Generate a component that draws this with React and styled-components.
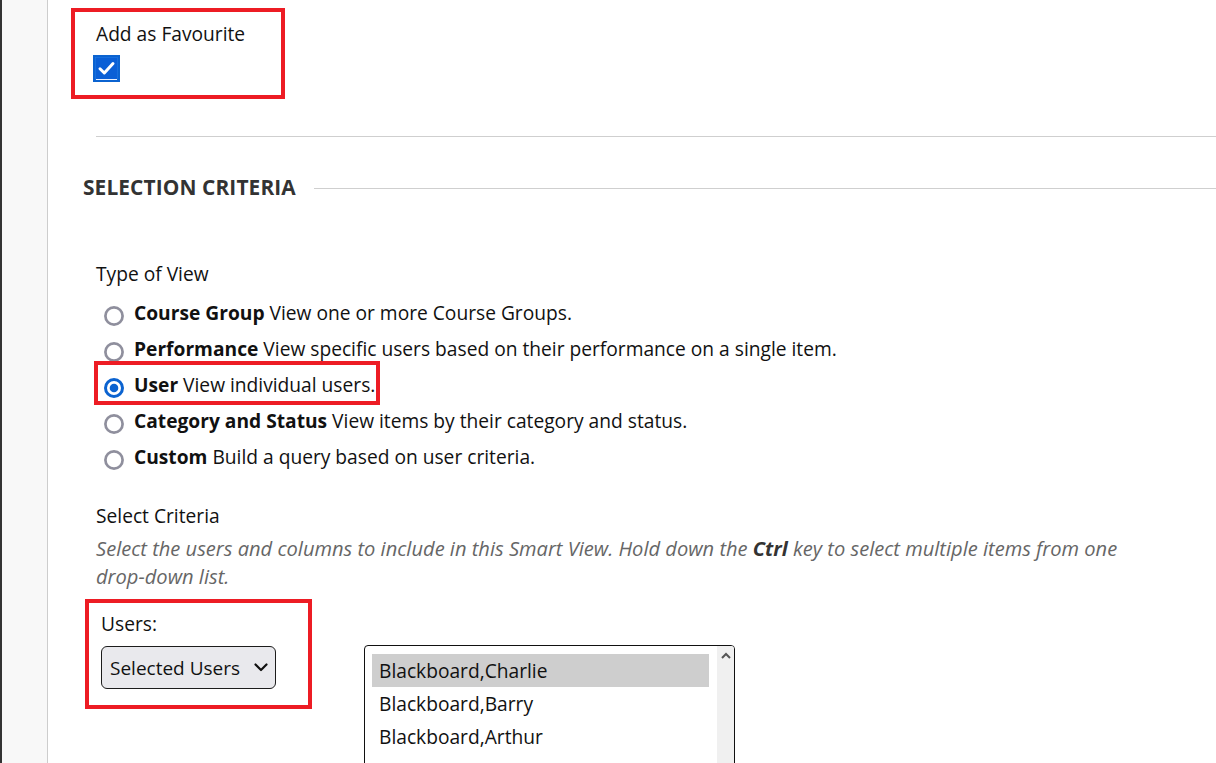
import React from 'react';
import styled, { createGlobalStyle } from 'styled-components';

const GlobalStyle = createGlobalStyle`
  html, body {
    margin: 0;
    padding: 0;
    background: #fff;
  }
  body {
    font-family: "Open Sans", "Noto Sans", sans-serif;
    color: #111;
  }
`;

const viewTypes = [
  { title: 'Course Group', text: 'View one or more Course Groups.' },
  { title: 'Performance', text: 'View specific users based on their performance on a single item.' },
  { title: 'User', text: 'View individual users.', checked: true },
  { title: 'Category and Status', text: 'View items by their category and status.' },
  { title: 'Custom', text: 'Build a query based on user criteria.' },
];

const users = ['Blackboard,Charlie', 'Blackboard,Barry', 'Blackboard,Arthur'];

function Checkbox() {
  return (
    <StyledCheck viewBox="0 0 27 27" width="27" height="27">
      <rect x="0" y="0" width="27" height="27" fill="#0b63d0" />
      <rect x="2.5" y="2.5" width="22" height="22" fill="#0a5fd6" stroke="#1f78e6" strokeWidth="0.6" />
      <path d="M7 13.8 L11.3 18 L20 8.6" fill="none" stroke="#fff" strokeWidth="3" strokeLinecap="round" strokeLinejoin="round" />
      <line x1="3" y1="24.5" x2="24" y2="24.5" stroke="#e8f0ff" strokeWidth="1" />
    </StyledCheck>
  );
}

function Radio({ checked }) {
  return (
    <StyledRadio viewBox="0 0 20 20" width="20" height="20">
      {checked ? (
        <>
          <circle cx="10" cy="10" r="8.5" fill="#fff" stroke="#0b63d0" strokeWidth="3" />
          <circle cx="10" cy="10" r="4.3" fill="#0b63d0" />
        </>
      ) : (
        <circle cx="10" cy="10" r="8.6" fill="#fff" stroke="#8f8f9d" strokeWidth="2.7" />
      )}
    </StyledRadio>
  );
}

export default function App() {
  return (
    <>
      <GlobalStyle />
      <StyledPage>
        <StyledRail />
        <StyledMain>
          <StyledFavBox>
            <StyledLabel>Add as Favourite</StyledLabel>
            <Checkbox />
          </StyledFavBox>

          <StyledRule />

          <StyledSectionHead>
            <h2>Selection Criteria</h2>
            <span />
          </StyledSectionHead>

          <StyledField>
            <StyledLabel>Type of View</StyledLabel>
            <StyledRadioList>
              {viewTypes.map((v) => (
                <StyledRadioRow key={v.title} $highlight={v.checked}>
                  <Radio checked={v.checked} />
                  <p>
                    <b>{v.title}</b> {v.text}
                  </p>
                </StyledRadioRow>
              ))}
            </StyledRadioList>
          </StyledField>

          <StyledCriteria>
            <StyledLabel>Select Criteria</StyledLabel>
            <StyledHint>
              Select the users and columns to include in this Smart View. Hold down the <b>Ctrl</b> key to select
              multiple items from one <span>drop-down</span> list.
            </StyledHint>
          </StyledCriteria>

          <StyledPickerRow>
            <StyledUsersBox>
              <StyledLabel>Users:</StyledLabel>
              <StyledSelect>
                <span>Selected Users</span>
                <svg width="14" height="9" viewBox="0 0 14 9">
                  <path d="M1.5 1.5 L7 7 L12.5 1.5" fill="none" stroke="#111" strokeWidth="2.2" strokeLinecap="round" strokeLinejoin="round" />
                </svg>
              </StyledSelect>
            </StyledUsersBox>

            <StyledListBox>
              <StyledOptions>
                {users.map((u, i) => (
                  <StyledOption key={u} $selected={i === 0}>
                    {u}
                  </StyledOption>
                ))}
              </StyledOptions>
              <StyledScrollbar>
                <svg width="10" height="7" viewBox="0 0 10 7">
                  <path d="M1 6 L5 2 L9 6" fill="none" stroke="#555" strokeWidth="2" />
                </svg>
              </StyledScrollbar>
            </StyledListBox>
          </StyledPickerRow>
        </StyledMain>
      </StyledPage>
    </>
  );
}

const StyledPage = styled.div`
  display: flex;
  width: 100%;
  height: 763px;
  overflow: hidden;
`;

const StyledRail = styled.div`
  flex: 0 0 48px;
  box-sizing: border-box;
  background: #f8f8f8;
  border-left: 2px solid #333;
  border-right: 1px solid #cdcdcd;
`;

const StyledMain = styled.main`
  flex: 1;
  min-width: 0;
  padding-top: 8px;
`;

const StyledLabel = styled.div`
  font-size: 19.2px;
  line-height: 24px;
  color: #111;
`;

const StyledFavBox = styled.div`
  box-sizing: border-box;
  width: 214px;
  height: 91px;
  margin-left: 23px;
  padding: 10px 0 0 21px;
  border: 4px solid #ed1c24;
  display: flex;
  flex-direction: column;
  gap: 9px;
`;

const StyledCheck = styled.svg`
  display: block;
  margin-left: -3px;
`;

const StyledRule = styled.hr`
  margin: 37px 0 0 48px;
  border: 0;
  border-top: 1px solid #cfcfcf;
  height: 0;
`;

const StyledSectionHead = styled.div`
  display: flex;
  align-items: center;
  gap: 18px;
  margin: 38px 0 0 35px;

  h2 {
    margin: 0;
    font-size: 20.9px;
    line-height: 24px;
    font-weight: 700;
    text-transform: uppercase;
    color: #333;
    letter-spacing: 0.1px;
  }

  span {
    flex: 1;
    border-top: 1px solid #cfcfcf;
    margin-top: 2px;
  }
`;

const StyledField = styled.div`
  margin: 63px 0 0 48px;
`;

const StyledRadioList = styled.div`
  margin-top: 9px;
  display: flex;
  flex-direction: column;
  align-items: flex-start;
`;

const StyledRadioRow = styled.label`
  position: relative;
  display: inline-flex;
  align-items: flex-start;
  gap: 10px;
  height: 36px;
  padding-left: 8px;

  p {
    margin: 0;
    font-size: 19.2px;
    line-height: 36px;
    color: #111;
    white-space: nowrap;
  }

  b {
    font-weight: 700;
  }

  ${({ $highlight }) =>
    $highlight &&
    `
    &::after {
      content: '';
      position: absolute;
      top: -6px;
      bottom: -2px;
      left: -2px;
      right: -5px;
      border: 4px solid #ed1c24;
      pointer-events: none;
    }
  `}
`;

const StyledRadio = styled.svg`
  flex: 0 0 20px;
  margin-top: 11px;
`;

const StyledCriteria = styled.div`
  margin: 29px 0 0 48px;
`;

const StyledHint = styled.p`
  max-width: 1100px;
  margin: 7px 0 0;
  font-size: 20.1px;
  line-height: 28px;
  font-style: italic;
  color: #666;

  b {
    font-weight: 700;
    color: #333;
  }

  span {
    white-space: nowrap;
  }
`;

const StyledPickerRow = styled.div`
  display: flex;
  align-items: flex-start;
  gap: 52px;
  margin: 8px 0 0 37px;
`;

const StyledUsersBox = styled.div`
  box-sizing: border-box;
  width: 227px;
  height: 110px;
  border: 4px solid #ed1c24;
  padding: 9px 0 0 12px;
  display: flex;
  flex-direction: column;
  gap: 10px;
`;

const StyledSelect = styled.div`
  box-sizing: border-box;
  width: 175px;
  height: 43px;
  display: flex;
  align-items: center;
  justify-content: space-between;
  padding: 0 7px 0 8px;
  background: #e9e9ed;
  border: 1px solid #1c1c1c;
  border-radius: 6px;
  font-size: 19px;
  color: #111;
`;

const StyledListBox = styled.div`
  box-sizing: border-box;
  width: 371px;
  height: 200px;
  margin-top: 46px;
  display: flex;
  border: 1px solid #111;
  border-radius: 4px 4px 0 0;
  overflow: hidden;
`;

const StyledOptions = styled.div`
  flex: 1;
  padding: 8px 8px 0 7px;
  display: flex;
  flex-direction: column;
`;

const StyledOption = styled.div`
  height: 33px;
  line-height: 33px;
  padding-left: 7px;
  font-size: 19.2px;
  color: #111;
  background: ${({ $selected }) => ($selected ? '#cecece' : 'transparent')};
`;

const StyledScrollbar = styled.div`
  flex: 0 0 17px;
  background: #f0f0f0;
  display: flex;
  justify-content: center;
  padding-top: 6px;
`;
